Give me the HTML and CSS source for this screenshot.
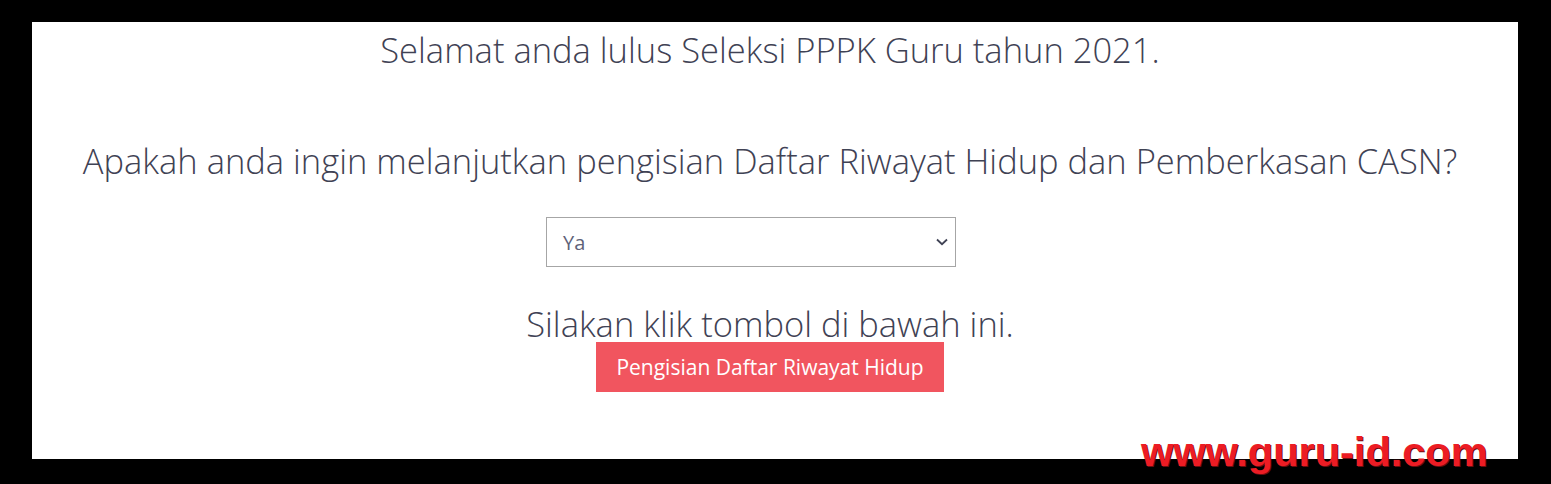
FILE: index.html
```html
<!DOCTYPE html>
<html>
<head>
<meta charset="utf-8">
<link rel="stylesheet" href="styles.css">
</head>
<body>
<div class="frame">
  <div class="panel">
    <h3 class="title line1">Selamat anda lulus Seleksi PPPK Guru tahun 2021.</h3>
    <h3 class="title line2">Apakah anda ingin melanjutkan pengisian Daftar Riwayat Hidup dan Pemberkasan CASN?</h3>
    <div class="select-row">
      <div class="select">
        <span class="select-value">Ya</span>
        <svg class="chev" width="12" height="8" viewBox="0 0 12 8"><path d="M1 1.5 L6 6.2 L11 1.5" fill="none" stroke="#3f4254" stroke-width="1.8"/></svg>
      </div>
    </div>
    <h3 class="title line3">Silakan klik tombol di bawah ini.</h3>
    <div class="btn-row"><button class="btn">Pengisian Daftar Riwayat Hidup</button></div>
  </div>
  <div class="watermark">www.guru-id.com</div>
</div>
</body>
</html>
```
FILE: styles.css
```css
html, body {
  margin: 0;
  padding: 0;
  background: #000;
}
.frame {
  position: relative;
  width: 1551px;
  height: 484px;
  box-sizing: border-box;
  padding: 22px 33px 25px 32px;
}
.panel {
  background: #fff;
  height: 437px;
  box-sizing: border-box;
  padding: 10px 10px 0 0;
  display: flex;
  flex-direction: column;
  align-items: stretch;
  font-family: "Open Sans", "Liberation Sans", sans-serif;
}
.title {
  margin: 0;
  font-weight: 300;
  font-size: 34.5px;
  line-height: 36px;
  color: #3f4254;
  text-align: center;
}
.line1 { margin-bottom: 75px; }
.line2 { margin-bottom: 38px; }
.select-row {
  display: flex;
  justify-content: center;
  margin-bottom: 39px;
}
.select {
  width: 410px;
  height: 50px;
  box-sizing: border-box;
  border: 1px solid #a6a6a6;
  margin-right: 38px;
  display: flex;
  align-items: center;
  justify-content: space-between;
  padding: 0 7px 0 16px;
}
.select-value {
  font-size: 20px;
  color: #5e6278;
}
.btn-row {
  display: flex;
  justify-content: center;
}
.btn {
  border: none;
  background: #f1555f;
  color: #fff;
  font-family: "Open Sans", "Liberation Sans", sans-serif;
  font-size: 21px;
  height: 50px;
  width: 348px;
  padding: 0;
}
.watermark {
  position: absolute;
  left: 1141px;
  top: 428px;
  font-family: "Liberation Sans", Arial, sans-serif;
  font-weight: bold;
  font-size: 41.5px;
  line-height: 48px;
  color: #ec1c24;
  text-shadow: 1px 1px 0 #6b0d10;
  white-space: nowrap;
}
```
